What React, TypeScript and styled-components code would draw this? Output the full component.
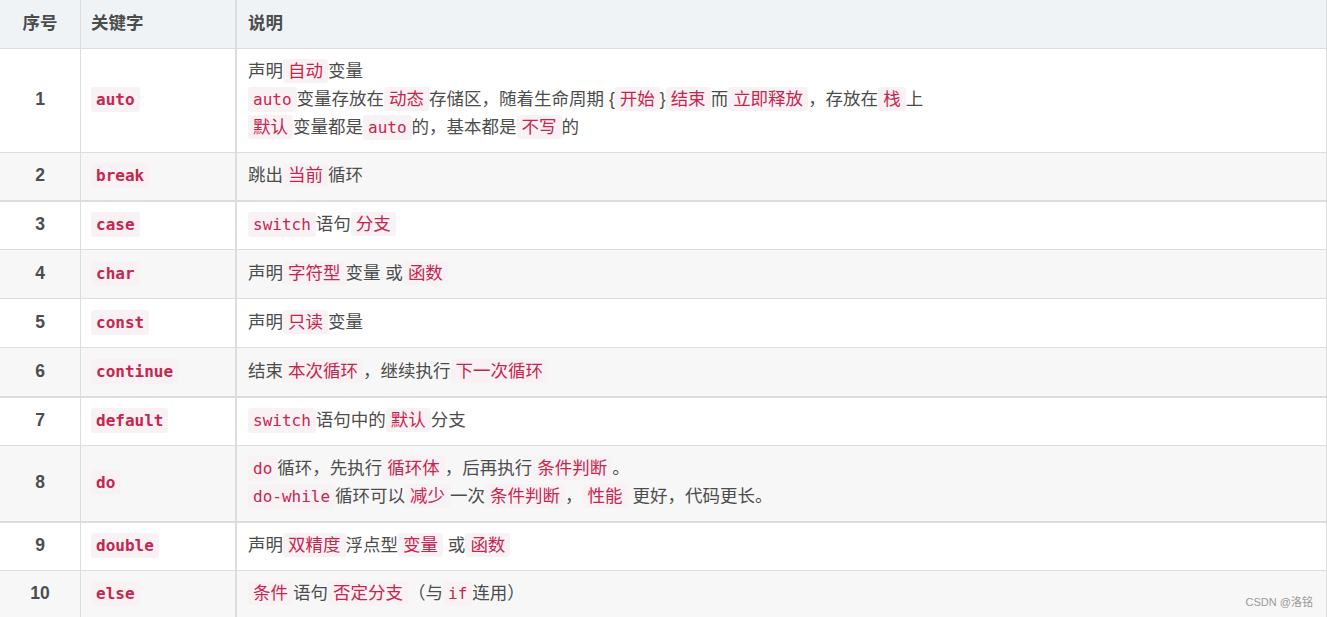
import React from 'react';
import styled, { createGlobalStyle } from 'styled-components';

const GlobalStyle = createGlobalStyle`
  html, body {
    margin: 0;
    padding: 0;
    background: #ffffff;
  }
  body {
    font-family: 'Liberation Sans', 'Noto Sans CJK SC', sans-serif;
    color: #4d4d4d;
  }
`;

const Wrapper = styled.div`
  position: relative;
  width: 1326px;
  height: 617px;
  border-right: 1px solid #dddddd;
  overflow: hidden;
`;

const Row = styled.div<{ $alt?: boolean; $head?: boolean; $thick?: boolean; $tall?: boolean }>`
  display: grid;
  grid-template-columns: 81px 156px 1fr;
  background: ${p => (p.$head ? '#eff3f5' : p.$alt ? '#f7f7f7' : '#ffffff')};
  border-bottom: ${p => (p.$thick ? 2 : 1)}px solid #dddddd;
  min-height: ${p => (p.$head || p.$tall ? 48 : 47)}px;
`;

const Cell = styled.div<{ $center?: boolean; $bold?: boolean; $wide?: boolean }>`
  display: flex;
  flex-direction: column;
  justify-content: center;
  align-items: ${p => (p.$center ? 'center' : 'flex-start')};
  padding: 8px 10px 11px;
  font-size: 17.5px;
  line-height: 28px;
  font-weight: ${p => (p.$bold ? 700 : 400)};
  border-right: ${p => (p.$wide ? 2 : 1)}px solid #dddddd;
  &:last-child {
    border-right: none;
    padding-left: 11px;
  }
`;

const Line = styled.div`
  height: 28px;
  line-height: 28px;
  white-space: nowrap;
`;

const Code = styled.code<{ $strong?: boolean; $cjk?: boolean }>`
  font-family: 'DejaVu Sans Mono', 'Noto Sans CJK SC', monospace;
  font-size: ${p => (p.$cjk ? 17.5 : 16)}px;
  font-weight: ${p => (p.$strong ? 700 : 400)};
  line-height: 1;
  color: #c7254e;
  background: #f9f2f4;
  border-radius: 3px;
  padding: ${p => (p.$cjk ? '2px 5px' : '3px 5px')};
`;

const C = ({ children }: { children: string }) => (
  <Code $cjk={/[^\x00-\x7f]/.test(children)}>{children}</Code>
);

const Watermark = styled.div`
  position: absolute;
  right: 13px;
  bottom: 8px;
  font-family: 'Liberation Sans', 'Noto Sans CJK SC', sans-serif;
  font-size: 11px;
  color: #999999;
`;

type RowData = {
  no: number;
  key: string;
  thick?: boolean;
  tall?: boolean;
  lines: React.ReactNode[];
};

const rows: RowData[] = [
  {
    no: 1,
    key: 'auto',
    lines: [
      <>声明<C>自动</C>变量</>,
      <><C>auto</C>变量存放在<C>动态</C>存储区，随着生命周期 {'{'}<C>开始</C>{'}'}<C>结束</C>而<C>立即释放</C>，存放在<C>栈</C>上</>,
      <><C>默认</C>变量都是<C>auto</C>的，基本都是<C>不写</C>的</>
    ]
  },
  { no: 2, key: 'break', thick: true, lines: [<>跳出<C>当前</C>循环</>] },
  { no: 3, key: 'case', lines: [<><C>switch</C>语句<C>分支</C></>] },
  { no: 4, key: 'char', tall: true, lines: [<>声明<C>字符型</C>变量 或<C>函数</C></>] },
  { no: 5, key: 'const', tall: true, lines: [<>声明<C>只读</C>变量</>] },
  {
    no: 6,
    key: 'continue',
    thick: true,
    tall: true,
    lines: [<>结束<C>本次循环</C>，继续执行<C>下一次循环</C></>]
  },
  { no: 7, key: 'default', lines: [<><C>switch</C>语句中的<C>默认</C>分支</>] },
  {
    no: 8,
    key: 'do',
    thick: true,
    lines: [
      <><C>do</C>循环，先执行<C>循环体</C>，后再执行<C>条件判断</C>。</>,
      <><C>do-while</C>循环可以<C>减少</C>一次<C>条件判断</C>，<C>性能</C> 更好，代码更长。</>
    ]
  },
  { no: 9, key: 'double', lines: [<>声明<C>双精度</C>浮点型<C>变量</C> 或<C>函数</C></>] },
  { no: 10, key: 'else', lines: [<><C>条件</C>语句<C>否定分支</C>（与<C>if</C>连用）</>] }
];

export default function App() {
  return (
    <>
      <GlobalStyle />
      <Wrapper>
        <Row $head>
          <Cell $center $bold>序号</Cell>
          <Cell $bold $wide>关键字</Cell>
          <Cell $bold>说明</Cell>
        </Row>
        {rows.map((r, i) => (
          <Row key={r.no} $alt={i % 2 === 1} $thick={r.thick} $tall={r.tall}>
            <Cell $center $bold>{r.no}</Cell>
            <Cell $wide>
              <Line><Code $strong>{r.key}</Code></Line>
            </Cell>
            <Cell>
              {r.lines.map((l, j) => (
                <Line key={j}>{l}</Line>
              ))}
            </Cell>
          </Row>
        ))}
        <Watermark>CSDN @洛铭</Watermark>
      </Wrapper>
    </>
  );
}
